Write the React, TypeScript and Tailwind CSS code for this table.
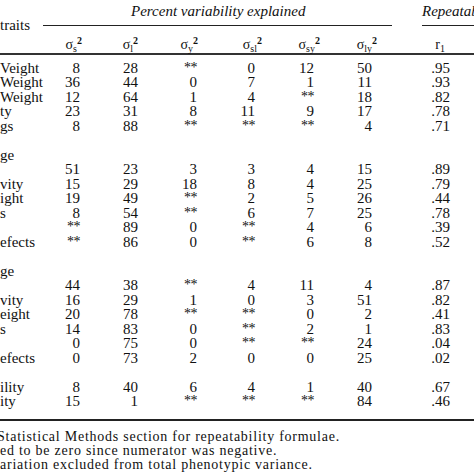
import React from 'react';

const cols = 'grid grid-cols-[50px_30px_58px_59px_58px_59px_58px_78px_1fr]';

type Row = { label: string; values?: string[] };

const rows: Row[] = [
  { label: 'Veight', values: ['8', '28', '**', '0', '12', '50', '.95'] },
  { label: 'Weight', values: ['36', '44', '0', '7', '1', '11', '.93'] },
  { label: 'Weight', values: ['12', '64', '1', '4', '**', '18', '.82'] },
  { label: 'ty', values: ['23', '31', '8', '11', '9', '17', '.78'] },
  { label: 'gs', values: ['8', '88', '**', '**', '**', '4', '.71'] },
  { label: '' },
  { label: 'ge' },
  { label: '', values: ['51', '23', '3', '3', '4', '15', '.89'] },
  { label: 'vity', values: ['15', '29', '18', '8', '4', '25', '.79'] },
  { label: 'ight', values: ['19', '49', '**', '2', '5', '26', '.44'] },
  { label: 's', values: ['8', '54', '**', '6', '7', '25', '.78'] },
  { label: '', values: ['**', '89', '0', '**', '4', '6', '.39'] },
  { label: 'efects', values: ['**', '86', '0', '**', '6', '8', '.52'] },
  { label: '' },
  { label: 'ge' },
  { label: '', values: ['44', '38', '**', '4', '11', '4', '.87'] },
  { label: 'vity', values: ['16', '29', '1', '0', '3', '51', '.82'] },
  { label: 'eight', values: ['20', '78', '**', '**', '0', '2', '.41'] },
  { label: 's', values: ['14', '83', '0', '**', '2', '1', '.83'] },
  { label: '', values: ['0', '75', '0', '**', '**', '24', '.04'] },
  { label: 'efects', values: ['0', '73', '2', '0', '0', '25', '.02'] },
  { label: '' },
  { label: 'ility', values: ['8', '40', '6', '4', '1', '40', '.67'] },
  { label: 'ity', values: ['15', '1', '**', '**', '**', '84', '.46'] },
];

const Sigma = ({ sub }: { sub: string }) => (
  <span className="whitespace-nowrap">
    σ<sub className="text-[10px]">{sub}</sub>
    <sup className="text-[10px] font-bold">2</sup>
  </span>
);

const Cell = ({ v }: { v: string }) =>
  v === '**' ? (
    <span className="text-right text-[14px] leading-[14.5px] tracking-[-0.5px]">**</span>
  ) : (
    <span className="text-right">{v}</span>
  );

export default function App() {
  return (
    <div className="w-[474px] h-[474px] overflow-hidden bg-white text-[#111] font-['Liberation_Serif',serif]">
      {/* column heads */}
      <div className="h-[19px] flex items-end text-[15px] italic leading-none whitespace-nowrap">
        <span className="ml-[131px] w-[291px] shrink-0">Percent variability explained</span>
        <span className="shrink-0">Repeatability</span>
      </div>
      <div className="h-[13px] flex items-center text-[15px]">
        <span className="w-[43px] shrink-0 leading-none">traits</span>
        <div className="w-[349px] shrink-0 h-px bg-[#222]" />
        <div className="ml-[30px] flex-1 h-px bg-[#222]" />
      </div>
      <div className={`${cols} h-[21px] items-center text-[14px] pt-[2px]`}>
        <span />
        <span className="text-right -mr-[2px]"><Sigma sub="s" /></span>
        <span className="text-right"><Sigma sub="l" /></span>
        <span className="text-right -mr-[1px]"><Sigma sub="y" /></span>
        <span className="text-right -mr-[7px]"><Sigma sub="sl" /></span>
        <span className="text-right -mr-[6px]"><Sigma sub="sy" /></span>
        <span className="text-right -mr-[5px]"><Sigma sub="ly" /></span>
        <span className="text-right mr-[5px]">r<sub className="text-[10px]">1</sub></span>
      </div>
      <div className="h-[1.5px] bg-[#333]" />

      {/* body */}
      <div className="pt-[6px] text-[15px] leading-[14.5px]">
        {rows.map((r, i) => (
          <div key={i} className={`${cols} h-[14.5px]`}>
            <span className="whitespace-nowrap">{r.label}</span>
            {r.values?.map((v, j) => <Cell key={j} v={v} />)}
          </div>
        ))}
      </div>

      <div className="mt-[10px] h-[2px] bg-[#222]" />

      {/* footnotes */}
      <div className="pt-[9px] text-[14px] leading-[14px] tracking-[0.75px] whitespace-nowrap">
        <p className="-ml-[3px]">Statistical Methods section for repeatability formulae.</p>
        <p>ed to be zero since numerator was negative.</p>
        <p>ariation excluded from total phenotypic variance.</p>
      </div>
    </div>
  );
}
